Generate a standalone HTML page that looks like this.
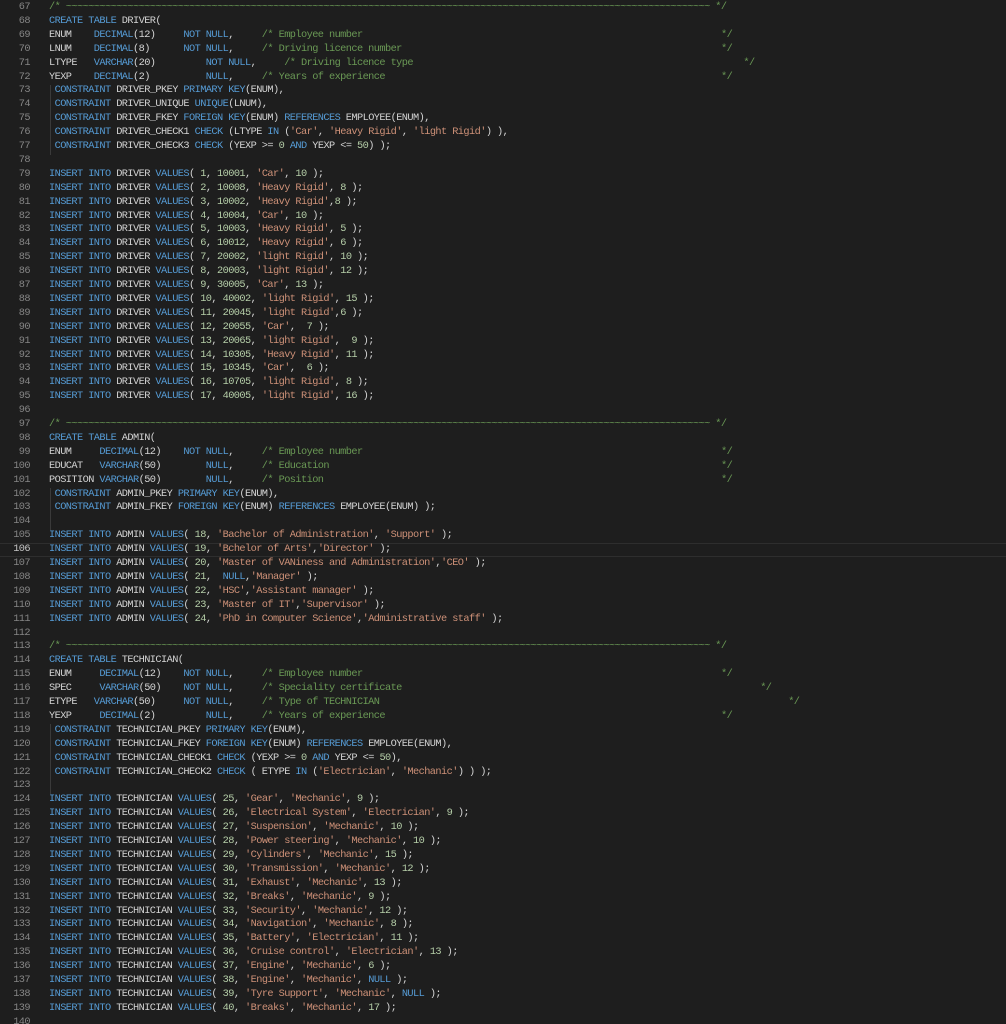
<!DOCTYPE html>
<html><head><meta charset="utf-8"><style>
html,body{margin:0;padding:0;background:#1e1e1e;width:1006px;height:1024px;overflow:hidden}
body{font-family:"Liberation Mono","DejaVu Sans Mono",monospace;font-size:10.3px;letter-spacing:-0.58px;color:#d4d4d4;position:relative;--c:5.6px}
.l{position:absolute;left:0;width:1006px;height:13.9px;line-height:13.9px;white-space:pre}
.n{position:absolute;left:0;width:30px;text-align:right;color:#858585}
.c{position:absolute;left:49px;top:0}
.a{position:absolute;top:0}
.cur{box-sizing:border-box;border-top:1px solid #2e2e2e;border-bottom:1px solid #2e2e2e}
.cur .n{color:#c6c6c6}
kw{color:#569cd6}st{color:#ce9178}nu{color:#b5cea8}cm{color:#6a9955}
.g{position:absolute;left:50px;width:1px;background:#3a3a3a}
</style></head><body>
<div class="g" style="top:85px;height:70px"></div>
<div class="g" style="top:488px;height:42px"></div>
<div class="g" style="top:724px;height:70px"></div>

<div class="l" style="top:1px"><span class="n">67</span><span class="c"><cm>/* ~~~~~~~~~~~~~~~~~~~~~~~~~~~~~~~~~~~~~~~~~~~~~~~~~~~~~~~~~~~~~~~~~~~~~~~~~~~~~~~~~~~~~~~~~~~~~~~~~~~~~~~~~~~~~~~~~~~ */</cm></span></div>
<div class="l" style="top:14.9px"><span class="n">68</span><span class="c"><kw>CREATE TABLE</kw> DRIVER(</span></div>
<div class="l" style="top:28.8px"><span class="n">69</span><span class="c">ENUM<kw class="a" style="left:calc(8*var(--c))">DECIMAL</kw><span class="a" style="left:calc(15*var(--c))">(12)</span><span class="a" style="left:calc(24*var(--c))"><kw>NOT NULL</kw>,</span><cm class="a" style="left:calc(38*var(--c))">/* Employee number</cm><cm class="a" style="left:calc(120*var(--c))">*/</cm></span></div>
<div class="l" style="top:42.7px"><span class="n">70</span><span class="c">LNUM<kw class="a" style="left:calc(8*var(--c))">DECIMAL</kw><span class="a" style="left:calc(15*var(--c))">(8)</span><span class="a" style="left:calc(24*var(--c))"><kw>NOT NULL</kw>,</span><cm class="a" style="left:calc(38*var(--c))">/* Driving licence number</cm><cm class="a" style="left:calc(120*var(--c))">*/</cm></span></div>
<div class="l" style="top:56.6px"><span class="n">71</span><span class="c">LTYPE<kw class="a" style="left:calc(8*var(--c))">VARCHAR</kw><span class="a" style="left:calc(15*var(--c))">(20)</span><span class="a" style="left:calc(28*var(--c))"><kw>NOT NULL</kw>,</span><cm class="a" style="left:calc(42*var(--c))">/* Driving licence type</cm><cm class="a" style="left:calc(124*var(--c))">*/</cm></span></div>
<div class="l" style="top:70.5px"><span class="n">72</span><span class="c">YEXP<kw class="a" style="left:calc(8*var(--c))">DECIMAL</kw><span class="a" style="left:calc(15*var(--c))">(2)</span><span class="a" style="left:calc(28*var(--c))"><kw>NULL</kw>,</span><cm class="a" style="left:calc(38*var(--c))">/* Years of experience</cm><cm class="a" style="left:calc(120*var(--c))">*/</cm></span></div>
<div class="l" style="top:84.4px"><span class="n">73</span><span class="c"> <kw>CONSTRAINT</kw> DRIVER_PKEY <kw>PRIMARY KEY</kw>(ENUM),</span></div>
<div class="l" style="top:98.3px"><span class="n">74</span><span class="c"> <kw>CONSTRAINT</kw> DRIVER_UNIQUE <kw>UNIQUE</kw>(LNUM),</span></div>
<div class="l" style="top:112.2px"><span class="n">75</span><span class="c"> <kw>CONSTRAINT</kw> DRIVER_FKEY <kw>FOREIGN KEY</kw>(ENUM) <kw>REFERENCES</kw> EMPLOYEE(ENUM),</span></div>
<div class="l" style="top:126.1px"><span class="n">76</span><span class="c"> <kw>CONSTRAINT</kw> DRIVER_CHECK1 <kw>CHECK</kw> (LTYPE <kw>IN</kw> (<st>'Car'</st>, <st>'Heavy Rigid'</st>, <st>'light Rigid'</st>) ),</span></div>
<div class="l" style="top:140px"><span class="n">77</span><span class="c"> <kw>CONSTRAINT</kw> DRIVER_CHECK3 <kw>CHECK</kw> (YEXP &gt;= <nu>0</nu> <kw>AND</kw> YEXP &lt;= <nu>50</nu>) );</span></div>
<div class="l" style="top:153.9px"><span class="n">78</span></div>
<div class="l" style="top:167.8px"><span class="n">79</span><span class="c"><kw>INSERT INTO</kw> DRIVER <kw>VALUES</kw>( <nu>1</nu>, <nu>10001</nu>, <st>'Car'</st>, <nu>10</nu> );</span></div>
<div class="l" style="top:181.7px"><span class="n">80</span><span class="c"><kw>INSERT INTO</kw> DRIVER <kw>VALUES</kw>( <nu>2</nu>, <nu>10008</nu>, <st>'Heavy Rigid'</st>, <nu>8</nu> );</span></div>
<div class="l" style="top:195.6px"><span class="n">81</span><span class="c"><kw>INSERT INTO</kw> DRIVER <kw>VALUES</kw>( <nu>3</nu>, <nu>10002</nu>, <st>'Heavy Rigid'</st>,<nu>8</nu> );</span></div>
<div class="l" style="top:209.5px"><span class="n">82</span><span class="c"><kw>INSERT INTO</kw> DRIVER <kw>VALUES</kw>( <nu>4</nu>, <nu>10004</nu>, <st>'Car'</st>, <nu>10</nu> );</span></div>
<div class="l" style="top:223.4px"><span class="n">83</span><span class="c"><kw>INSERT INTO</kw> DRIVER <kw>VALUES</kw>( <nu>5</nu>, <nu>10003</nu>, <st>'Heavy Rigid'</st>, <nu>5</nu> );</span></div>
<div class="l" style="top:237.3px"><span class="n">84</span><span class="c"><kw>INSERT INTO</kw> DRIVER <kw>VALUES</kw>( <nu>6</nu>, <nu>10012</nu>, <st>'Heavy Rigid'</st>, <nu>6</nu> );</span></div>
<div class="l" style="top:251.2px"><span class="n">85</span><span class="c"><kw>INSERT INTO</kw> DRIVER <kw>VALUES</kw>( <nu>7</nu>, <nu>20002</nu>, <st>'light Rigid'</st>, <nu>10</nu> );</span></div>
<div class="l" style="top:265.1px"><span class="n">86</span><span class="c"><kw>INSERT INTO</kw> DRIVER <kw>VALUES</kw>( <nu>8</nu>, <nu>20003</nu>, <st>'light Rigid'</st>, <nu>12</nu> );</span></div>
<div class="l" style="top:279px"><span class="n">87</span><span class="c"><kw>INSERT INTO</kw> DRIVER <kw>VALUES</kw>( <nu>9</nu>, <nu>30005</nu>, <st>'Car'</st>, <nu>13</nu> );</span></div>
<div class="l" style="top:292.9px"><span class="n">88</span><span class="c"><kw>INSERT INTO</kw> DRIVER <kw>VALUES</kw>( <nu>10</nu>, <nu>40002</nu>, <st>'light Rigid'</st>, <nu>15</nu> );</span></div>
<div class="l" style="top:306.8px"><span class="n">89</span><span class="c"><kw>INSERT INTO</kw> DRIVER <kw>VALUES</kw>( <nu>11</nu>, <nu>20045</nu>, <st>'light Rigid'</st>,<nu>6</nu> );</span></div>
<div class="l" style="top:320.7px"><span class="n">90</span><span class="c"><kw>INSERT INTO</kw> DRIVER <kw>VALUES</kw>( <nu>12</nu>, <nu>20055</nu>, <st>'Car'</st>,  <nu>7</nu> );</span></div>
<div class="l" style="top:334.6px"><span class="n">91</span><span class="c"><kw>INSERT INTO</kw> DRIVER <kw>VALUES</kw>( <nu>13</nu>, <nu>20065</nu>, <st>'light Rigid'</st>,  <nu>9</nu> );</span></div>
<div class="l" style="top:348.5px"><span class="n">92</span><span class="c"><kw>INSERT INTO</kw> DRIVER <kw>VALUES</kw>( <nu>14</nu>, <nu>10305</nu>, <st>'Heavy Rigid'</st>, <nu>11</nu> );</span></div>
<div class="l" style="top:362.4px"><span class="n">93</span><span class="c"><kw>INSERT INTO</kw> DRIVER <kw>VALUES</kw>( <nu>15</nu>, <nu>10345</nu>, <st>'Car'</st>,  <nu>6</nu> );</span></div>
<div class="l" style="top:376.3px"><span class="n">94</span><span class="c"><kw>INSERT INTO</kw> DRIVER <kw>VALUES</kw>( <nu>16</nu>, <nu>10705</nu>, <st>'light Rigid'</st>, <nu>8</nu> );</span></div>
<div class="l" style="top:390.2px"><span class="n">95</span><span class="c"><kw>INSERT INTO</kw> DRIVER <kw>VALUES</kw>( <nu>17</nu>, <nu>40005</nu>, <st>'light Rigid'</st>, <nu>16</nu> );</span></div>
<div class="l" style="top:404.1px"><span class="n">96</span></div>
<div class="l" style="top:418px"><span class="n">97</span><span class="c"><cm>/* ~~~~~~~~~~~~~~~~~~~~~~~~~~~~~~~~~~~~~~~~~~~~~~~~~~~~~~~~~~~~~~~~~~~~~~~~~~~~~~~~~~~~~~~~~~~~~~~~~~~~~~~~~~~~~~~~~~~ */</cm></span></div>
<div class="l" style="top:431.9px"><span class="n">98</span><span class="c"><kw>CREATE TABLE</kw> ADMIN(</span></div>
<div class="l" style="top:445.8px"><span class="n">99</span><span class="c">ENUM<kw class="a" style="left:calc(9*var(--c))">DECIMAL</kw><span class="a" style="left:calc(16*var(--c))">(12)</span><span class="a" style="left:calc(24*var(--c))"><kw>NOT NULL</kw>,</span><cm class="a" style="left:calc(38*var(--c))">/* Employee number</cm><cm class="a" style="left:calc(120*var(--c))">*/</cm></span></div>
<div class="l" style="top:459.7px"><span class="n">100</span><span class="c">EDUCAT<kw class="a" style="left:calc(9*var(--c))">VARCHAR</kw><span class="a" style="left:calc(16*var(--c))">(50)</span><span class="a" style="left:calc(28*var(--c))"><kw>NULL</kw>,</span><cm class="a" style="left:calc(38*var(--c))">/* Education</cm><cm class="a" style="left:calc(120*var(--c))">*/</cm></span></div>
<div class="l" style="top:473.6px"><span class="n">101</span><span class="c">POSITION<kw class="a" style="left:calc(9*var(--c))">VARCHAR</kw><span class="a" style="left:calc(16*var(--c))">(50)</span><span class="a" style="left:calc(28*var(--c))"><kw>NULL</kw>,</span><cm class="a" style="left:calc(38*var(--c))">/* Position</cm><cm class="a" style="left:calc(120*var(--c))">*/</cm></span></div>
<div class="l" style="top:487.5px"><span class="n">102</span><span class="c"> <kw>CONSTRAINT</kw> ADMIN_PKEY <kw>PRIMARY KEY</kw>(ENUM),</span></div>
<div class="l" style="top:501.4px"><span class="n">103</span><span class="c"> <kw>CONSTRAINT</kw> ADMIN_FKEY <kw>FOREIGN KEY</kw>(ENUM) <kw>REFERENCES</kw> EMPLOYEE(ENUM) );</span></div>
<div class="l" style="top:515.3px"><span class="n">104</span></div>
<div class="l" style="top:529.2px"><span class="n">105</span><span class="c"><kw>INSERT INTO</kw> ADMIN <kw>VALUES</kw>( <nu>18</nu>, <st>'Bachelor of Administration'</st>, <st>'Support'</st> );</span></div>
<div class="l cur" style="top:543.1px"><span class="n" style="top:-1px">106</span><span class="c" style="top:-1px"><kw>INSERT INTO</kw> ADMIN <kw>VALUES</kw>( <nu>19</nu>, <st>'Bchelor of Arts'</st>,<st>'Director'</st> );</span></div>
<div class="l" style="top:557px"><span class="n">107</span><span class="c"><kw>INSERT INTO</kw> ADMIN <kw>VALUES</kw>( <nu>20</nu>, <st>'Master of VANiness and Administration'</st>,<st>'CEO'</st> );</span></div>
<div class="l" style="top:570.9px"><span class="n">108</span><span class="c"><kw>INSERT INTO</kw> ADMIN <kw>VALUES</kw>( <nu>21</nu>,  <kw>NULL</kw>,<st>'Manager'</st> );</span></div>
<div class="l" style="top:584.8px"><span class="n">109</span><span class="c"><kw>INSERT INTO</kw> ADMIN <kw>VALUES</kw>( <nu>22</nu>, <st>'HSC'</st>,<st>'Assistant manager'</st> );</span></div>
<div class="l" style="top:598.7px"><span class="n">110</span><span class="c"><kw>INSERT INTO</kw> ADMIN <kw>VALUES</kw>( <nu>23</nu>, <st>'Master of IT'</st>,<st>'Supervisor'</st> );</span></div>
<div class="l" style="top:612.6px"><span class="n">111</span><span class="c"><kw>INSERT INTO</kw> ADMIN <kw>VALUES</kw>( <nu>24</nu>, <st>'PhD in Computer Science'</st>,<st>'Administrative staff'</st> );</span></div>
<div class="l" style="top:626.5px"><span class="n">112</span></div>
<div class="l" style="top:640.4px"><span class="n">113</span><span class="c"><cm>/* ~~~~~~~~~~~~~~~~~~~~~~~~~~~~~~~~~~~~~~~~~~~~~~~~~~~~~~~~~~~~~~~~~~~~~~~~~~~~~~~~~~~~~~~~~~~~~~~~~~~~~~~~~~~~~~~~~~~ */</cm></span></div>
<div class="l" style="top:654.3px"><span class="n">114</span><span class="c"><kw>CREATE TABLE</kw> TECHNICIAN(</span></div>
<div class="l" style="top:668.2px"><span class="n">115</span><span class="c">ENUM<kw class="a" style="left:calc(9*var(--c))">DECIMAL</kw><span class="a" style="left:calc(16*var(--c))">(12)</span><span class="a" style="left:calc(24*var(--c))"><kw>NOT NULL</kw>,</span><cm class="a" style="left:calc(38*var(--c))">/* Employee number</cm><cm class="a" style="left:calc(120*var(--c))">*/</cm></span></div>
<div class="l" style="top:682.1px"><span class="n">116</span><span class="c">SPEC<kw class="a" style="left:calc(9*var(--c))">VARCHAR</kw><span class="a" style="left:calc(16*var(--c))">(50)</span><span class="a" style="left:calc(24*var(--c))"><kw>NOT NULL</kw>,</span><cm class="a" style="left:calc(38*var(--c))">/* Speciality certificate</cm><cm class="a" style="left:calc(127*var(--c))">*/</cm></span></div>
<div class="l" style="top:696px"><span class="n">117</span><span class="c">ETYPE<kw class="a" style="left:calc(8*var(--c))">VARCHAR</kw><span class="a" style="left:calc(15*var(--c))">(50)</span><span class="a" style="left:calc(24*var(--c))"><kw>NOT NULL</kw>,</span><cm class="a" style="left:calc(38*var(--c))">/* Type of TECHNICIAN</cm><cm class="a" style="left:calc(132*var(--c))">*/</cm></span></div>
<div class="l" style="top:709.9px"><span class="n">118</span><span class="c">YEXP<kw class="a" style="left:calc(9*var(--c))">DECIMAL</kw><span class="a" style="left:calc(16*var(--c))">(2)</span><span class="a" style="left:calc(28*var(--c))"><kw>NULL</kw>,</span><cm class="a" style="left:calc(38*var(--c))">/* Years of experience</cm><cm class="a" style="left:calc(120*var(--c))">*/</cm></span></div>
<div class="l" style="top:723.8px"><span class="n">119</span><span class="c"> <kw>CONSTRAINT</kw> TECHNICIAN_PKEY <kw>PRIMARY KEY</kw>(ENUM),</span></div>
<div class="l" style="top:737.7px"><span class="n">120</span><span class="c"> <kw>CONSTRAINT</kw> TECHNICIAN_FKEY <kw>FOREIGN KEY</kw>(ENUM) <kw>REFERENCES</kw> EMPLOYEE(ENUM),</span></div>
<div class="l" style="top:751.6px"><span class="n">121</span><span class="c"> <kw>CONSTRAINT</kw> TECHNICIAN_CHECK1 <kw>CHECK</kw> (YEXP &gt;= <nu>0</nu> <kw>AND</kw> YEXP &lt;= <nu>50</nu>),</span></div>
<div class="l" style="top:765.5px"><span class="n">122</span><span class="c"> <kw>CONSTRAINT</kw> TECHNICIAN_CHECK2 <kw>CHECK</kw> ( ETYPE <kw>IN</kw> (<st>'Electrician'</st>, <st>'Mechanic'</st>) ) );</span></div>
<div class="l" style="top:779.4px"><span class="n">123</span></div>
<div class="l" style="top:793.3px"><span class="n">124</span><span class="c"><kw>INSERT INTO</kw> TECHNICIAN <kw>VALUES</kw>( <nu>25</nu>, <st>'Gear'</st>, <st>'Mechanic'</st>, <nu>9</nu> );</span></div>
<div class="l" style="top:807.2px"><span class="n">125</span><span class="c"><kw>INSERT INTO</kw> TECHNICIAN <kw>VALUES</kw>( <nu>26</nu>, <st>'Electrical System'</st>, <st>'Electrician'</st>, <nu>9</nu> );</span></div>
<div class="l" style="top:821.1px"><span class="n">126</span><span class="c"><kw>INSERT INTO</kw> TECHNICIAN <kw>VALUES</kw>( <nu>27</nu>, <st>'Suspension'</st>, <st>'Mechanic'</st>, <nu>10</nu> );</span></div>
<div class="l" style="top:835px"><span class="n">127</span><span class="c"><kw>INSERT INTO</kw> TECHNICIAN <kw>VALUES</kw>( <nu>28</nu>, <st>'Power steering'</st>, <st>'Mechanic'</st>, <nu>10</nu> );</span></div>
<div class="l" style="top:848.9px"><span class="n">128</span><span class="c"><kw>INSERT INTO</kw> TECHNICIAN <kw>VALUES</kw>( <nu>29</nu>, <st>'Cylinders'</st>, <st>'Mechanic'</st>, <nu>15</nu> );</span></div>
<div class="l" style="top:862.8px"><span class="n">129</span><span class="c"><kw>INSERT INTO</kw> TECHNICIAN <kw>VALUES</kw>( <nu>30</nu>, <st>'Transmission'</st>, <st>'Mechanic'</st>, <nu>12</nu> );</span></div>
<div class="l" style="top:876.7px"><span class="n">130</span><span class="c"><kw>INSERT INTO</kw> TECHNICIAN <kw>VALUES</kw>( <nu>31</nu>, <st>'Exhaust'</st>, <st>'Mechanic'</st>, <nu>13</nu> );</span></div>
<div class="l" style="top:890.6px"><span class="n">131</span><span class="c"><kw>INSERT INTO</kw> TECHNICIAN <kw>VALUES</kw>( <nu>32</nu>, <st>'Breaks'</st>, <st>'Mechanic'</st>, <nu>9</nu> );</span></div>
<div class="l" style="top:904.5px"><span class="n">132</span><span class="c"><kw>INSERT INTO</kw> TECHNICIAN <kw>VALUES</kw>( <nu>33</nu>, <st>'Security'</st>, <st>'Mechanic'</st>, <nu>12</nu> );</span></div>
<div class="l" style="top:918.4px"><span class="n">133</span><span class="c"><kw>INSERT INTO</kw> TECHNICIAN <kw>VALUES</kw>( <nu>34</nu>, <st>'Navigation'</st>, <st>'Mechanic'</st>, <nu>8</nu> );</span></div>
<div class="l" style="top:932.3px"><span class="n">134</span><span class="c"><kw>INSERT INTO</kw> TECHNICIAN <kw>VALUES</kw>( <nu>35</nu>, <st>'Battery'</st>, <st>'Electrician'</st>, <nu>11</nu> );</span></div>
<div class="l" style="top:946.2px"><span class="n">135</span><span class="c"><kw>INSERT INTO</kw> TECHNICIAN <kw>VALUES</kw>( <nu>36</nu>, <st>'Cruise control'</st>, <st>'Electrician'</st>, <nu>13</nu> );</span></div>
<div class="l" style="top:960.1px"><span class="n">136</span><span class="c"><kw>INSERT INTO</kw> TECHNICIAN <kw>VALUES</kw>( <nu>37</nu>, <st>'Engine'</st>, <st>'Mechanic'</st>, <nu>6</nu> );</span></div>
<div class="l" style="top:974px"><span class="n">137</span><span class="c"><kw>INSERT INTO</kw> TECHNICIAN <kw>VALUES</kw>( <nu>38</nu>, <st>'Engine'</st>, <st>'Mechanic'</st>, <kw>NULL</kw> );</span></div>
<div class="l" style="top:987.9px"><span class="n">138</span><span class="c"><kw>INSERT INTO</kw> TECHNICIAN <kw>VALUES</kw>( <nu>39</nu>, <st>'Tyre Support'</st>, <st>'Mechanic'</st>, <kw>NULL</kw> );</span></div>
<div class="l" style="top:1001.8px"><span class="n">139</span><span class="c"><kw>INSERT INTO</kw> TECHNICIAN <kw>VALUES</kw>( <nu>40</nu>, <st>'Breaks'</st>, <st>'Mechanic'</st>, <nu>17</nu> );</span></div>
<div class="l" style="top:1015.7px"><span class="n">140</span></div>
</body></html>
